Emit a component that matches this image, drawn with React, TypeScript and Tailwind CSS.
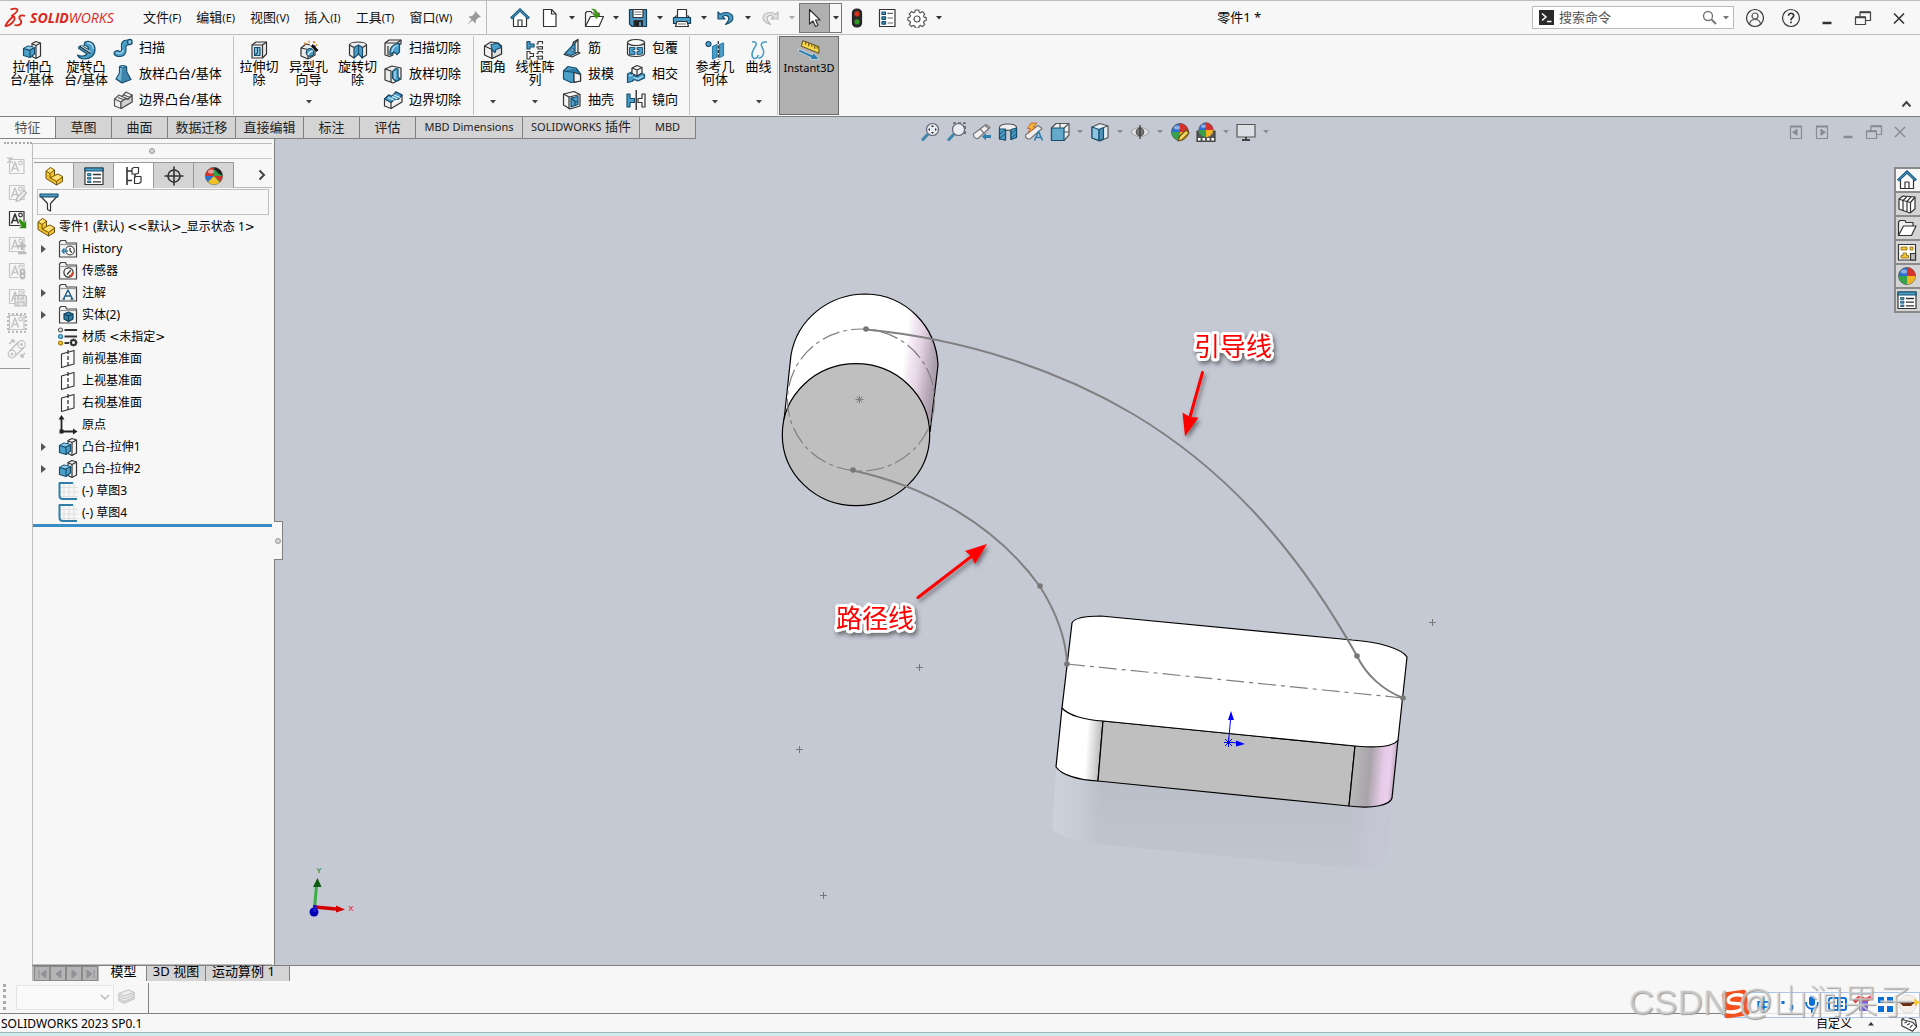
import { Fragment } from "react";
import type { ReactNode } from "react";

type Kids = { children?: ReactNode };

const B = "#4b9fc9";
const L = "#8cc8e4";
const K = "#333333";

function Ico({ children, size = 20 }: Kids & { size?: number }) {
  return (
    <svg
      width={size}
      height={size}
      viewBox="0 0 20 20"
      fill="none"
      stroke={K}
      strokeWidth="1.2"
      strokeLinejoin="round"
      className="block shrink-0"
      aria-hidden="true"
    >
      {children}
    </svg>
  );
}

function Caret({ className = "text-[#444]" }: { className?: string }) {
  return (
    <svg width="6" height="4" viewBox="0 0 6 4" className={`block shrink-0 ${className}`} aria-hidden="true">
      <path d="M0 0H6L3 3.5Z" fill="currentColor" />
    </svg>
  );
}

/* ---------- Ribbon icons ---------- */

const boss = (
  <Ico>
    <path d="M10 3.5 14 1.5 18.500 3V16L14 18.5 10 16.5Z" fill="#f4f4f4" />
    <path d="M14 5.500V18M14 5.500 10 3.8M14 5.500 18.500 3" />
    <path d="M1.5 8.5 6 6 12.500 7.5V14L8 17.5 1.5 15.5Z" fill={B} stroke="#174f6e" />
    <path d="M2 8.5 6 6.5 12 7.6 8 9.8Z" fill={L} stroke="none" />
    <path d="M1.5 8.5 8 10.3 12.500 7.5M8 10.3V17.5" stroke="#174f6e" />
  </Ico>
);
const revolve = (
  <Ico>
    <path d="M9 2C15 0 19 4 19 9.500C19 15.500 14 19 8.500 19C5 19 2.500 17.500 1.500 15C5 17 9 16 11 14L3 8.500C1.500 8 4 5 6 6L12.500 9.500C13 7.500 11 5.500 8 5.500Z" fill={B} stroke="#174f6e" />
    <path d="M11 2.800C15 2.500 17.500 5.500 17.200 9" stroke="#b7e0f2" />
    <path d="M4 6.500 14.500 13.500" stroke={K} strokeWidth="1.500" />
    <path d="M5 6 14.500 12" stroke="#fff" strokeWidth=".8" />
  </Ico>
);
const sweep = (
  <Ico>
    <path d="M1 15.500C1 12.500 5 12 6.500 13.500C8.500 14 9 12 8.500 9.500C7.500 5 10 2 14 2L18 1.500 19 5.500 15 7C12.500 7 13 9 13 11C13.500 16 10.500 18.500 7 18.500C3.500 18.500 1.500 17.500 1 15.500Z" fill={B} stroke="#174f6e" />
    <ellipse cx="16.800" cy="4" rx="2.200" ry="2.600" fill={L} stroke="#174f6e" />
    <path d="M3 14.500C6 16 9 16 10.300 12" stroke="#a9d8ee" />
  </Ico>
);
const loft = (
  <Ico>
    <path d="M6.500 2.500 9.500 1.500 13.500 2.500 13.800 8 18 15.500 9 19 3 15 6.500 9Z" fill="#3f86ad" stroke="#174f6e" />
    <path d="M6.500 2.500 9.500 3.800 13.500 2.500 9.500 1.500Z" fill={L} stroke="#174f6e" strokeWidth=".8" />
    <path d="M7 4V9L4 14.500 8 17 9 4Z" fill="#76b6d6" stroke="none" />
  </Ico>
);
const boundary = (
  <Ico>
    <path d="M1.500 9 6 5 9 6.500 13 2 19 5V12L8 18.500 1.500 16Z" fill="#f1f1f1" stroke="#555" />
    <path d="M1.500 9 8 12 12 9 15 9.500 19 5M8 12V18.500M5 7.500 11.500 10M9 6.500 15 9M10 4.500 17 7.500" stroke="#555" />
    <path d="M8 12 12 9 15 9.500 19 5V12L8 18.500Z" fill="#d3d3d3" stroke="#555" />
  </Ico>
);
const cutExtrude = (
  <Ico>
    <path d="M3 5 7 2H17.500V14L13.500 18H3Z" fill="#ececec" />
    <path d="M3 5H13.500V18M13.500 5 17.500 2" />
    <rect x="5.500" y="7.500" width="5.500" height="8" fill={L} stroke="#174f6e" />
    <path d="M5.500 15.500 8.500 13V7.500" stroke="#174f6e" />
  </Ico>
);
const holeWizard = (
  <Ico>
    <path d="M2 8 7 4 16 6V15L9 19 2 16Z" fill="#ececec" />
    <path d="M2 8 9 9.500V19" />
    <circle cx="11" cy="12.500" r="3.800" fill={B} stroke="#174f6e" />
    <path d="M9 15C10 12 12 11 14 11" stroke="#fff" />
    <path d="M12.500 5 18.500 11" stroke="#111" strokeWidth="2.600" />
    <path d="M11.500 4 12.800 5.300" stroke="#fff" strokeWidth="2" />
    <path d="M6 2.500V5M4.800 3.700H7.300M10 .5V3M15 1V3.500M13.800 2.200H16.300M17.500 4V6" stroke="#e0852c" />
  </Ico>
);
const cutRevolve = (
  <Ico>
    <path d="M1.500 5C1.500 1 18.500 1 18.500 5V15L14 18 10.500 8 6 18 1.500 15Z" fill="#ececec" />
    <path d="M6 7.500 10.500 5 14.500 7.500V18L10.500 14 6 18Z" fill={B} stroke="#174f6e" />
    <path d="M10.500 5V14" stroke="#174f6e" />
    <path d="M1.500 5 6 7.500M18.500 5 14.500 7.500" />
  </Ico>
);
const cutSweep = (
  <Ico>
    <path d="M2 5 6 2H18V6C12 7 9.500 11 10 17L6.500 18.500 2 17Z" fill="#ececec" />
    <path d="M2 5H14L18 2M5 8V17.500" />
    <path d="M7 17C6 10 10 5.500 16.500 5.500V14L14 16.500 11 14Z" fill={B} stroke="#174f6e" />
    <path d="M9 14C9 10 12 7.500 15 7.500" stroke="#b7e0f2" />
  </Ico>
);
const cutLoft = (
  <Ico>
    <path d="M2 5 9 2 18 4V15L10 19 2 16Z" fill="#ececec" />
    <path d="M2 5 8 7V18" />
    <path d="M9.500 7.500 13 4.500 15 5V13L17 15 13 17.500 9.500 14Z" fill={B} stroke="#174f6e" />
    <path d="M12 7V15" stroke="#b7e0f2" />
  </Ico>
);
const cutBoundary = (
  <Ico>
    <path d="M1.500 9 6 5 9 6.500 13 2 19 5V12L8 18.500 1.500 16Z" fill="#f1f1f1" />
    <path d="M1.500 9 6 5 9 6.500 13 2 19 5 15 9.500 12 9 8 12.500Z" fill={B} stroke="#174f6e" />
    <path d="M5 7.500 11 10M9 6.500 14.500 9M10.500 4.800 17 7.500" stroke="#d4eefa" />
    <path d="M8 12V18.500" />
  </Ico>
);
const fillet = (
  <Ico>
    <path d="M1.500 6 8 2 15 3 18.500 6V14L9 18.500 1.500 15Z" fill="#f2f2f2" />
    <path d="M1.500 6 9 9.500V18.500" />
    <path d="M9 9.500C9 6.500 11 4.500 14.500 4.500L18.500 8V14L9 18.500Z" fill="#dedede" />
    <path d="M8 4.500 15 3.200 18.500 7.500 13 9.500 12 12.500 9 9.500C8 7 8.500 5.500 8 4.500Z" fill={B} stroke="#174f6e" />
  </Ico>
);
const pattern = (
  <Ico>
    <path d="M2 1.500H5V4H9V7H5V9H2Z" fill={B} stroke="#174f6e" />
    <path d="M11.500 4H13V1.500H17.500V4M17.500 6.500V9H13V7H11.500Z" fill="#f7f7f7" strokeWidth="1.100" />
    <path d="M2 11.500H5V13.500H8.500V16.500H5V19H2Z" fill="#f7f7f7" strokeWidth="1.100" />
    <path d="M11.500 13.500H13V11.500H17.500V13.500M17.500 16V19H13V16.500H11.500Z" fill="#f7f7f7" strokeWidth="1.100" />
  </Ico>
);
const rib = (
  <Ico>
    <path d="M11.500 4 16 1.500V14L18 15 10 19 2 16.500 9 13Z" fill="#ececec" />
    <path d="M3 15.500 13 5V15.500L9 17.500Z" fill={B} stroke="#174f6e" />
    <path d="M8.500 13 11 10V14Z" fill="#f7f7f7" stroke="#174f6e" strokeWidth=".8" />
    <path d="M13 5 16 1.500M13 15.500 16 14" />
  </Ico>
);
const draft = (
  <Ico>
    <path d="M1.500 7 6 2.500 14 4 18.500 10V17L9 18.500 1.500 15Z" fill={B} stroke="#174f6e" />
    <path d="M1.500 7 12 8.500 12 18 18.500 17V10L14 4" fill="#2f7ba5" stroke="#174f6e" />
    <path d="M12 8.500 18.500 10.500V17L12 18.300Z" fill="#f4f4f4" />
  </Ico>
);
const shell = (
  <Ico>
    <path d="M1.500 4 12 1.500 18 4.500V16L8 19 1.500 15Z" fill="#f4f4f4" />
    <path d="M1.500 4 7 7V19M7 7 18 4.500" />
    <path d="M9 8 16 6.500V14.500L9 17Z" fill={B} stroke="#174f6e" />
    <path d="M9 8 13 11.500V15.500M13 11.500 16 12" stroke="#174f6e" />
  </Ico>
);
const wrap = (
  <Ico>
    <path d="M1.500 4.500V15.500C1.500 19.500 18.500 19.500 18.500 15.500V4.500Z" fill="#ededed" />
    <ellipse cx="10" cy="4.500" rx="8.500" ry="3" fill="#fafafa" />
    <path d="M3.500 9.500H9V11.500H7V13.500H9V16.500H3.500ZM11 9.500H16.500V16L11 16.500V13.500H13V11.500H11Z" fill={B} stroke="#174f6e" strokeWidth=".9" />
  </Ico>
);
const intersect = (
  <Ico>
    <path d="M6 4 11 1.500 16 3.500V9L11 12 6 9.500Z" fill="#f4f4f4" />
    <path d="M6 4 11 6V12M11 6 16 3.500" />
    <path d="M1.500 10 5.500 8V10.500L11 12.500 16 9.500 18.500 10.500V14L12 17 8 15.500 6 17.500 1.500 18.500Z" fill={B} stroke="#174f6e" />
    <path d="M3 12 7 10.800M8 13.500 12 15 17 12" stroke="#b7e0f2" />
  </Ico>
);
const mirror = (
  <Ico>
    <path d="M1 4H4V8.500H8.500V12.500H4V17H1Z" fill={B} stroke="#174f6e" />
    <path d="M19 4H16V8.500H12V12.500H16V17H19Z" fill="#f7f7f7" />
    <path d="M10.200 0V20" stroke="#111" />
  </Ico>
);
const refGeom = (
  <Ico>
    <circle cx="3.500" cy="4" r="2.500" fill={B} stroke="#174f6e" />
    <path d="M7.500 6.500 12 4.500V17L7.500 19ZM14.500 4.500 18.500 3V15.500L14.500 17.500Z" fill={B} stroke="#2b7fae" />
    <path d="M13.300 1V19.500" stroke="#222" strokeDasharray="3 1.500" />
  </Ico>
);
const curves = (
  <Ico>
    <path d="M3 2C6 1 8.500 3 6.500 6C4 10 2 13 3.500 17C5 19.500 8.500 18.500 9.500 15M18 2C14 1.500 11 3 13 7C16 12 15 17 9.500 18.500" stroke="#4a9cc6" strokeWidth="1.500" />
  </Ico>
);
const instant3d = (
  <Ico size={22}>
    <path d="M4.500 1.500 19 7V13L3 6.500Z" fill="#f7d648" stroke="#4a3d10" strokeWidth=".8" />
    <path d="M7 2.800V5M9.800 3.800V6.500M12.500 5V7M15.200 6V8.800M17.500 6.800V8.800" stroke="#4a3d10" strokeWidth=".9" />
    <path d="M.5 9 13 14.500 14 12.500 19.500 18.500 11 18.800 12 17 .5 11.500Z" fill="#2d7fb0" stroke="#fff" strokeWidth=".5" />
  </Ico>
);

/* ---------- Shared small icons ---------- */

const home = (
  <Ico>
    <path d="M3.500 9V18.500H16.500V9" fill="#fff" />
    <path d="M8 18V12H12V18" />
    <path d="M1 10.500 10 2 19 10.500" stroke="#1b5a80" strokeWidth="3" strokeLinejoin="miter" />
    <path d="M1.500 10 10 2.200 18.500 10" stroke={B} strokeWidth="1" strokeLinejoin="miter" />
  </Ico>
);
const partIcon = (
  <Ico>
    <path d="M2 5 6.500 1.500 10.500 4V9.500L14 8 18.500 10.500V15.500L12.500 19 2 12.500Z" fill="#f2c230" stroke="#6b4f0b" strokeWidth="1" />
    <path d="M3 5 6.500 2.300 9.800 4.200 6 6.700ZM8 11.700 14 8.800 17.500 10.800 12.500 14Z" fill="#ffe27a" stroke="none" />
    <path d="M2 5 6 7.500V12L12.500 15.500V19M6 7.500 10.500 4M12.500 15.500 18.500 11M6 12 10.500 9.500" stroke="#6b4f0b" strokeWidth=".9" />
  </Ico>
);
const listIcon = (
  <Ico>
    <rect x="1" y="2" width="18" height="16.500" fill="#fff" />
    <path d="M1 2H19V5H1Z" fill={B} stroke="#174f6e" />
    <path d="M3.500 7.500H7V9.500H3.500ZM3.500 11.200H7V13.200H3.500ZM3.500 15H7V16.500H3.500Z" fill={B} stroke="#174f6e" strokeWidth=".8" />
    <path d="M9 8.500H17M9 12.200H17M9 15.800H17" strokeWidth="1.300" />
  </Ico>
);
const ballInner = (
  <>
    <circle cx="10" cy="10" r="8.500" fill="#2f6fd0" stroke="#555" strokeWidth=".8" />
    <path d="M10 10V1.500A8.500 8.500 0 0 1 18.500 10Z" fill="#d3332c" stroke="none" />
    <path d="M10 10H18.500A8.500 8.500 0 0 1 10 18.500Z" fill="#f0b422" stroke="none" />
    <path d="M10 10V18.500A8.500 8.500 0 0 1 1.500 10Z" fill="#37a04a" stroke="none" />
    <ellipse cx="7" cy="5.500" rx="3" ry="2" fill="#fff" fillOpacity=".45" stroke="none" />
  </>
);

/* ---------- Title bar ---------- */

const menus = [
  ["文件", "(F)"],
  ["编辑", "(E)"],
  ["视图", "(V)"],
  ["插入", "(I)"],
  ["工具", "(T)"],
  ["窗口", "(W)"],
];

const quick: { label: string; icon: ReactNode; caret?: boolean; faded?: boolean }[] = [
  { label: "主页", icon: home },
  {
    label: "新建",
    caret: true,
    icon: (
      <Ico>
        <path d="M3.500 1.500H11.500L16 6V18.500H3.500Z" fill="#fff" />
        <path d="M11.500 1.500V6H16" />
      </Ico>
    ),
  },
  {
    label: "打开",
    caret: true,
    icon: (
      <Ico>
        <path d="M1.500 18.500V5L3 3.500H7L8 5H15V8" fill="#f4f4f4" />
        <path d="M1.500 18.500 6.500 8.500H19.500L15 18.500Z" fill="#fff" />
        <path d="M7 1C11 0 13.500 2.500 13.500 6H16.500L12.500 11 8.500 6H11C11 4 9.500 2 7 1Z" fill="#3f9a10" stroke="none" />
      </Ico>
    ),
  },
  {
    label: "保存",
    caret: true,
    icon: (
      <Ico>
        <path d="M1.500 1.500H18.500V18.500H4L1.500 16Z" fill="#4a94bd" stroke="#123f58" />
        <path d="M5 1.500H15V9.500H5Z" fill="#fff" />
        <path d="M6.500 4H13.500M6.500 6.500H13.500" stroke="#777" />
        <path d="M6 12.500H14.500V18.500H6Z" fill="#222" />
        <path d="M11 14H13V18H11Z" fill="#4a94bd" stroke="none" />
      </Ico>
    ),
  },
  {
    label: "打印",
    caret: true,
    icon: (
      <Ico>
        <path d="M5.500 9V1.500H14.500V9" fill="#fff" />
        <path d="M1.500 9.500H18.500V15.500H1.500Z" fill={B} stroke="#123f58" />
        <path d="M3 9 4.500 7.500M17 9 15.500 7.500" />
        <path d="M5 13.500H15L16.500 18.500H3.500Z" fill="#fff" />
        <path d="M6 16H14" stroke="#888" />
      </Ico>
    ),
  },
  {
    label: "撤消",
    caret: true,
    icon: (
      <Ico>
        <path d="M2 4V11H9L6.500 8.800C10 6 14 8 12.500 12C12 14 10.500 15.500 9.500 16.500C14 15.500 17.500 12.500 16.800 9C16 4.500 9 3 4.300 6.300Z" fill={B} stroke="#174f6e" />
      </Ico>
    ),
  },
  {
    label: "重做",
    caret: true,
    faded: true,
    icon: (
      <Ico>
        <path d="M18 4V11H11L13.500 8.800C10 6 6 8 7.500 12C8 14 9.500 15.500 10.500 16.500C6 15.500 2.500 12.500 3.200 9C4 4.500 11 3 15.700 6.300Z" fill="#e4e4e4" stroke="#bbb" />
      </Ico>
    ),
  },
];

function TitleBar() {
  return (
    <header className="flex h-[35px] shrink-0 items-center border-t border-b border-[#bdbdbd] bg-[#f7f7f7]">
      <div className="flex w-[143px] shrink-0 items-center pl-1 text-[#da291c]">
        <svg width="22" height="22" viewBox="0 0 22 22" fill="none" stroke="#da291c" strokeWidth="1.800" aria-hidden="true">
          <path d="M6.500 2.500C9 1.500 13 1 13.500 2.500C14 4.500 10.500 7 7.500 9" />
          <path d="M7.500 9C11 8.500 12 12 8.500 15.500C6 18 2.500 19.500 1.500 19C2 16 5.500 13 9 9.500" />
          <path d="M21 9C18 7.500 14.500 8.500 15.500 11.500C17 14 18.500 15 16.500 17C15 18.500 12.500 18.500 10.500 18" />
        </svg>
        <span className="ml-1 font-['Open_Sans',sans-serif] text-sm italic">
          <b>SOLID</b>WORKS
        </span>
      </div>
      <nav className="flex shrink-0 gap-[15px]" aria-label="菜单">
        {menus.map(([t, k]) => (
          <button key={t} className="whitespace-nowrap text-[13px] text-[#111]">
            {t}
            <span className="text-[11px]">{k}</span>
          </button>
        ))}
      </nav>
      <button aria-label="固定" className="ml-3.5">
        <svg width="16" height="16" viewBox="0 0 16 16" fill="#999" className="block" aria-hidden="true">
          <path d="M9 1 15 7 12.500 7.500 10 10 9.500 13.500 6.500 10.500 1 15 5.500 9.500 2.500 6.500 6 6 8.500 3.500Z" />
        </svg>
      </button>
      <div className="ml-1 flex h-full items-center border-l border-[#bdbdbd] pl-[18px]">
        {quick.map((q) => (
          <div key={q.label} className="flex items-center">
            <button aria-label={q.label} className="flex w-[30px] justify-center">
              {q.icon}
            </button>
            {q.caret && (
              <button aria-label={`${q.label}选项`} className="flex h-6 w-[14px] items-center justify-center">
                <Caret className={q.faded ? "text-[#aaa]" : "text-[#333]"} />
              </button>
            )}
          </div>
        ))}
        <button aria-label="选择" className="flex h-[30px] w-[31px] items-center justify-center border border-[#777] bg-[#b0b0b0]">
          <Ico>
            <path d="M4.500 1.500V16L8 13 10.500 18.500 13 17.300 10.500 12H15Z" fill="#fff" />
          </Ico>
        </button>
        <button aria-label="选择选项" className="flex h-[30px] w-3 items-center justify-center border border-l-0 border-[#777]">
          <Caret className="text-[#333]" />
        </button>
        <button aria-label="重建模型" className="flex w-[30px] justify-center">
          <Ico>
            <rect x="5.500" y="1" width="9" height="18" rx="4" fill="#2b2b2b" stroke="#222" />
            <circle cx="10" cy="5.800" r="2.600" fill="#d8311c" stroke="none" />
            <circle cx="10" cy="13.800" r="2.600" fill="#2c9a22" stroke="none" />
          </Ico>
        </button>
        <button aria-label="文件属性" className="flex w-[30px] justify-center">
          <Ico>
            <rect x="2.500" y="1.500" width="15.500" height="17" fill="#fff" />
            <path d="M5 4H8.500V6.500H5ZM5 8.800H8.500V11.300H5ZM5 13.600H8.500V16.100H5Z" fill={B} stroke="#174f6e" />
            <path d="M10.500 5.300H16M10.500 10H16M10.500 15H16" stroke="#666" />
          </Ico>
        </button>
        <button aria-label="选项" className="flex w-[30px] justify-center">
          <Ico>
            <path d="M8.300 2h3.400l.5 2.200 1.400.6 1.900-1.200 2.200 2.300-1.100 1.900.5 1.300 2.100.6v2.800l-2.100.6-.6 1.400 1.200 1.900-2.200 2.200-1.900-1.200-1.400.6-.5 2.100H8.300l-.5-2.100-1.400-.6-1.900 1.200-2.200-2.200 1.200-1.900-.6-1.400-2-.6V9.700l2-.6.6-1.300-1.200-1.900 2.200-2.300 1.900 1.200 1.400-.6Z" stroke="#555" fill="#fff" />
            <circle cx="10" cy="11" r="3" stroke="#555" />
          </Ico>
        </button>
        <button aria-label="更多选项" className="flex h-6 w-[14px] items-center justify-center">
          <Caret className="text-[#333]" />
        </button>
      </div>
      <h1 className="flex-1 text-center text-[13px] text-black">零件1 *</h1>
      <label className="flex h-[23px] w-[202px] items-center border border-[#bbb] bg-white pl-1.5 pr-1">
        <svg width="15" height="15" viewBox="0 0 15 15" className="shrink-0" aria-hidden="true">
          <path d="M0 0H15V15H0Z" fill="#2a2a2a" />
          <path d="M3 3.500 7 7 3 10.500M8 11.500H12.500" stroke="#fff" strokeWidth="1.500" fill="none" />
        </svg>
        <input aria-label="搜索命令" placeholder="搜索命令" className="ml-[5px] w-full min-w-0 bg-transparent text-[13px] outline-none placeholder:text-[#555]" />
        <svg width="15" height="15" viewBox="0 0 15 15" fill="none" stroke="#777" strokeWidth="1.300" className="shrink-0" aria-hidden="true">
          <circle cx="6" cy="6" r="4.500" />
          <path d="M9.500 9.500 14 14" strokeWidth="2" />
        </svg>
        <span className="ml-1.5">
          <Caret className="text-[#777]" />
        </span>
      </label>
      <div className="flex w-[186px] pl-[3px]">
        <button aria-label="登录" className="flex w-9 justify-center">
          <Ico>
            <circle cx="10" cy="10" r="8.500" />
            <circle cx="10" cy="8" r="3" stroke="#555" />
            <path d="M4.500 16C5 12.500 7 11.500 10 11.500S15 12.500 15.500 16" stroke="#555" />
          </Ico>
        </button>
        <button aria-label="帮助" className="flex w-9 justify-center">
          <Ico>
            <circle cx="10" cy="10" r="8.500" />
            <path d="M7.500 7.800C7.500 4.300 12.800 4.500 12.700 7.700C12.600 9.500 10 9.700 10 12.200M10 13.500V15.300" strokeWidth="1.700" />
          </Ico>
        </button>
        <button aria-label="最小化" className="flex w-9 justify-center">
          <Ico>
            <path d="M5.500 15H14.500" strokeWidth="2.500" />
          </Ico>
        </button>
        <button aria-label="还原" className="flex w-9 justify-center">
          <Ico>
            <path d="M7 9V4H17.500V12.500H12.500M2.500 9H12.500V16.500H2.500Z" stroke="#444" />
            <path d="M7 4.300H17.500M2.500 9.300H12.500" stroke="#444" strokeWidth="2" />
          </Ico>
        </button>
        <button aria-label="关闭" className="flex w-9 justify-center">
          <Ico>
            <path d="M5 5.500 15 15.500M15 5.500 5 15.500" strokeWidth="1.600" />
          </Ico>
        </button>
      </div>
    </header>
  );
}

/* ---------- Ribbon ---------- */

function Big({ icon, lines, caret, w }: { icon: ReactNode; lines: string[]; caret?: boolean; w: string }) {
  return (
    <button className={`relative flex h-full shrink-0 flex-col items-center pt-[5px] text-[13px] leading-[13px] ${w}`}>
      {icon}
      <span className="whitespace-nowrap">
        {lines.map((l, i) => (
          <Fragment key={l}>
            {i > 0 && <br />}
            {l}
          </Fragment>
        ))}
      </span>
      {caret && (
        <span className="absolute bottom-3">
          <Caret />
        </span>
      )}
    </button>
  );
}

function Small({ items, className }: { items: [string, ReactNode][]; className: string }) {
  return (
    <div className={`flex shrink-0 flex-col ${className}`}>
      {items.map(([t, icon]) => (
        <button key={t} className="flex h-[26px] items-center gap-1.5 whitespace-nowrap text-[13px]">
          {icon}
          <span>{t}</span>
        </button>
      ))}
    </div>
  );
}

const Sep = () => <div className="my-px w-px shrink-0 self-stretch bg-[#c4c4c4]" />;

function Ribbon() {
  return (
    <section className="flex h-[82px] shrink-0 border-b border-[#808080] bg-[#f7f7f7] pl-[5px] text-black" aria-label="特征">
      <Big w="w-[54px]" icon={boss} lines={["拉伸凸", "台/基体"]} />
      <Big w="w-[54px]" icon={revolve} lines={["旋转凸", "台/基体"]} />
      <Small className="w-[120px]" items={[["扫描", sweep], ["放样凸台/基体", loft], ["边界凸台/基体", boundary]]} />
      <Sep />
      <Big w="w-[50px]" icon={cutExtrude} lines={["拉伸切", "除"]} />
      <Big w="w-[49px]" icon={holeWizard} lines={["异型孔", "向导"]} caret />
      <Big w="w-[49px]" icon={cutRevolve} lines={["旋转切", "除"]} />
      <Small className="w-[91px] pl-px" items={[["扫描切除", cutSweep], ["放样切除", cutLoft], ["边界切除", cutBoundary]]} />
      <Sep />
      <Big w="w-[38px]" icon={fillet} lines={["圆角"]} caret />
      <Big w="w-[46px]" icon={pattern} lines={["线性阵", "列"]} caret />
      <Small className="w-[68px] pl-1" items={[["筋", rib], ["拔模", draft], ["抽壳", shell]]} />
      <Small className="w-[63px]" items={[["包覆", wrap], ["相交", intersect], ["镜向", mirror]]} />
      <Sep />
      <Big w="w-[50px]" icon={refGeom} lines={["参考几", "何体"]} caret />
      <Big w="w-[37px]" icon={curves} lines={["曲线"]} caret />
      <Sep />
      <button className="my-px ml-px flex w-[60px] flex-col items-center border border-[#6a6a6a] bg-[#b0b0b0] pt-0.5 font-['Noto_Sans',sans-serif] text-[11px]">
        {instant3d}
        <span className="leading-[14px]">Instant3D</span>
      </button>
      <button aria-label="折叠" className="ml-auto mb-2 mr-2 self-end">
        <svg width="11" height="8" viewBox="0 0 11 8" fill="none" stroke="#444" strokeWidth="2" className="block" aria-hidden="true">
          <path d="M1.500 6.500 5.500 2 9.500 6.500" />
        </svg>
      </button>
    </section>
  );
}

const tabs: [string, string, string][] = [
  ["", "特征", "w-14"],
  ["", "草图", "w-14"],
  ["", "曲面", "w-14"],
  ["", "数据迁移", "w-[68px]"],
  ["", "直接编辑", "w-[68px]"],
  ["", "标注", "w-14"],
  ["", "评估", "w-14"],
  ["MBD Dimensions", "", "w-[107px]"],
  ["SOLIDWORKS", " 插件", "w-[117px]"],
  ["MBD", "", "w-14"],
];

/* ---------- Feature tree ---------- */

function NoteIcon({ active, children }: Kids & { active?: boolean }) {
  const c = active ? "#333" : "#c6c6c6";
  return (
    <Ico>
      <path d="M2.500 2.500H17V16.500H2.500Z" stroke={c} fill="none" />
      <path d="M4.500 14.500 8 5 11.500 14.500M5.500 11.500H10.500" stroke={c} strokeWidth="1.600" />
      <circle cx="13.500" cy="6" r="1.800" stroke={c} />
      {children}
    </Ico>
  );
}

const noteTools: [string, ReactNode][] = [
  ["新建注解视图", <NoteIcon><path d="M0 0 6 6M6 0 0 6M3 -1V7" stroke="#c6c6c6" /></NoteIcon>],
  ["编辑注解视图", <NoteIcon><path d="M9 18.500 10 14.500 17 7.500 19.500 10 12.500 17.500Z" fill="#eee" stroke="#bbb" /></NoteIcon>],
  ["激活注解视图", <NoteIcon active><path d="M11 11 13 9.500 17 13.500 19.500 11.500V19.500H11.500L14 17Z" fill="#2f8f0c" stroke="#f7f7f7" strokeWidth=".6" /></NoteIcon>],
  ["添加注解", <NoteIcon><path d="M15 7V15M11 11H19M11 18H19.500" stroke="#bbb" strokeWidth="2.500" /></NoteIcon>],
  ["注解可见性", <NoteIcon><rect x="12" y="7" width="7" height="12" rx="3" fill="#bbb" stroke="#f7f7f7" /><path d="M15.500 9.500V11.500M15.500 14V16" stroke="#eee" strokeWidth="2" /></NoteIcon>],
  ["保存注解视图", <NoteIcon><path d="M8 8.500H18L19.500 10V19H8Z" fill="#e5e5e5" stroke="#bbb" /><path d="M11 8.500V12H16V8.500M10.500 19V15H17V19" stroke="#bbb" /></NoteIcon>],
  ["框选注解", <NoteIcon><path d="M1 1H19V19H1Z" stroke="#bbb" strokeWidth="2.500" strokeDasharray="2 2" /></NoteIcon>],
  [
    "运动链",
    <Ico>
      <circle cx="5" cy="15" r="3.800" stroke="#c0c0c0" />
      <circle cx="14.500" cy="5.500" r="3.800" stroke="#c0c0c0" />
      <path d="M2.500 12 11.500 3M7.500 17.500 17 8.500M2 5 7 1M7 1H4M7 1V4M18 14 14 18M14 18V15M14 18H17" stroke="#c0c0c0" strokeWidth="1.500" />
      <circle cx="5" cy="15" r="1" stroke="#c0c0c0" />
      <circle cx="14.500" cy="5.500" r="1" stroke="#c0c0c0" />
    </Ico>,
  ],
];

function Folder({ children }: Kids) {
  return (
    <Ico>
      <path d="M1.500 18V3L3 1.500H7.500L8.500 4H18.500V18Z" fill="#f4f4f4" stroke="#444" />
      <path d="M1.500 5.500H18.500" stroke="#999" />
      {children}
    </Ico>
  );
}

const plane = (
  <Ico>
    <path d="M3.500 5 16 1.500V15L3.500 18.500Z" fill="#fafafa" strokeWidth="1.100" />
    <path d="M10 1V19" strokeDasharray="4 2" strokeWidth="1.300" />
  </Ico>
);
const sketch = (
  <Ico>
    <path d="M6 1.500V19M11 1.500V19M16 1.500V19M1 6.500H20M1 11H20M1 15.500H20" stroke="#e0e0e0" />
    <path d="M15 2H1.500V14.500Q1.500 18 5 18H19" stroke="#2e7ea8" strokeWidth="2" />
  </Ico>
);

const tree: { t: string; icon: ReactNode; open?: boolean }[] = [
  {
    t: "History",
    open: true,
    icon: (
      <Folder>
        <circle cx="12" cy="11.500" r="4.300" fill="#fff" stroke="#555" />
        <path d="M12 9V11.800L14 13.500" />
        <path d="M4 12H10M4 12 6.500 9.500M4 12 6.500 14.500" stroke="#2d7fb0" strokeWidth="1.600" />
      </Folder>
    ),
  },
  {
    t: "传感器",
    icon: (
      <Folder>
        <circle cx="10.500" cy="11.500" r="4.600" fill="#fff" />
        <path d="M9 13.500 13 9" />
        <path d="M11 15C13.500 15 14.500 13.500 14.500 11.500" stroke="#e04020" strokeWidth="2" />
      </Folder>
    ),
  },
  {
    t: "注解",
    open: true,
    icon: (
      <Folder>
        <path d="M5.500 16 10 7 14.500 16M7.500 13H12.500M4.500 16H7M12.500 16H15.500" stroke="#235f88" strokeWidth="1.500" />
      </Folder>
    ),
  },
  {
    t: "实体(2)",
    open: true,
    icon: (
      <Folder>
        <path d="M6 9 10.500 7 15 9V14L10.500 16.500 6 14Z" fill="#2f7fa8" stroke="#123f58" />
        <path d="M6 9 10.500 11 15 9M10.500 11V16.500" stroke="#123f58" />
      </Folder>
    ),
  },
  {
    t: "材质 <未指定>",
    icon: (
      <Ico>
        <circle cx="2.500" cy="3" r="2" fill="#eee" stroke="#555" />
        <circle cx="2.500" cy="9.500" r="2" fill={L} stroke="#1f6f9a" />
        <circle cx="2.500" cy="16" r="2" fill="#f2c230" stroke="#a87d10" />
        <path d="M6.500 3H19M6.500 9.500H19M6.500 16H11" strokeWidth="1.800" />
        <circle cx="15.500" cy="15.500" r="2.500" strokeWidth="2" fill="none" />
        <path d="M15.500 11.500V13M15.500 18V19.500M11.500 15.500H13M18 15.500H19.500M12.700 12.700 13.700 13.700M17.300 17.300 18.300 18.300M18.300 12.700 17.300 13.700M13.700 17.300 12.700 18.300" strokeWidth="1.300" />
      </Ico>
    ),
  },
  { t: "前视基准面", icon: plane },
  { t: "上视基准面", icon: plane },
  { t: "右视基准面", icon: plane },
  {
    t: "原点",
    icon: (
      <Ico>
        <path d="M3.500 4V16.500H16" strokeWidth="1.800" stroke="#222" />
        <path d="M3.500 0 6.500 4.500H.5ZM19.500 16.500 15 13.500V19.500ZM1.500 14.500H5.500V18.500H1.500Z" fill="#222" stroke="none" />
      </Ico>
    ),
  },
  { t: "凸台-拉伸1", open: true, icon: boss },
  { t: "凸台-拉伸2", open: true, icon: boss },
  { t: "(-) 草图3", icon: sketch },
  { t: "(-) 草图4", icon: sketch },
];

/* Angle brackets take the wider DejaVu glyphs. */
function TreeText({ text }: { text: string }) {
  return (
    <>
      {text.split(/([<>]+)/).map((part, i) =>
        i % 2 ? (
          <span key={i} className="font-['DejaVu_Sans',sans-serif]">
            {part}
          </span>
        ) : (
          part
        ),
      )}
    </>
  );
}

const panelTabs: [string, ReactNode, string][] = [
  ["FeatureManager", partIcon, "bg-[#f7f7f7]"],
  ["PropertyManager", listIcon, "bg-[#d4d4d4]"],
  [
    "ConfigurationManager",
    <Ico>
      <path d="M3 1V19M3 5H8M3 14.500H8M11 8V11" strokeWidth="1.600" />
      <path d="M8 2.500 10 1.500H14.500V7L12.500 8H8ZM10.500 11.500 12 10.500H17V16L15 17.500H10.500Z" fill="#fff" />
    </Ico>,
    "bg-white",
  ],
  [
    "DimXpertManager",
    <Ico>
      <circle cx="10" cy="10" r="6" strokeWidth="1.600" />
      <path d="M10 .5V19.500M.5 10H19.500" strokeWidth="1.600" />
    </Ico>,
    "bg-[#d4d4d4]",
  ],
  [
    "DisplayManager",
    <Ico>
      <circle cx="10" cy="10" r="8.500" fill="#37a04a" stroke="#555" strokeWidth=".8" />
      <path d="M10 10H1.500A8.500 8.500 0 0 1 10 1.500Z" fill="#d3332c" stroke="none" />
      <path d="M10 10H1.500A8.500 8.500 0 0 0 4 16Z" fill="#2f6fd0" stroke="none" />
      <path d="M10 10 15.500 16.500A8.500 8.500 0 0 1 4 16Z" fill="#f0c028" stroke="none" />
      <path d="M10 10 16.500 15.500A8.500 8.500 0 0 0 18.500 10Z" fill="#d3332c" stroke="none" />
      <path d="M10 1.500A8.500 8.500 0 0 1 18.500 9.500L15 8 10 3Z" fill="#222" stroke="none" />
      <ellipse cx="7" cy="5.500" rx="3" ry="2" fill="#fff" fillOpacity=".5" stroke="none" />
    </Ico>,
    "bg-[#d4d4d4]",
  ],
];

function SidePanel() {
  return (
    <aside className="flex shrink-0 bg-[#f7f7f7]">
      <div className="w-8 shrink-0" role="toolbar" aria-label="注解">
        <div className="ml-1 mt-[3px] h-[2px] border-t-2 border-dotted border-[#aaa]" />
        <div className="mt-2.5 mr-0.5 flex flex-col items-center border-b border-[#999] pb-1.5 pl-1">
          {noteTools.map(([label, icon]) => (
            <button key={label} aria-label={label} className="flex h-[26px] items-center">
              {icon}
            </button>
          ))}
        </div>
      </div>
      <div className="flex w-[243px] flex-col border-r border-[#808080] pt-1 text-black">
        <div className="mr-0.5 flex min-h-0 flex-1 flex-col border-t border-l border-[#bdbdbd]">
          <div className="flex h-[15px] items-center justify-center border-b border-[#c8c8c8] pr-0.5">
            <span className="h-1.5 w-1.5 rounded-full border border-[#999] bg-[#d4d4d4]" />
          </div>
          <div className="ml-px mt-[3px] flex items-stretch">
            {panelTabs.map(([label, icon, bg]) => (
              <button key={label} aria-label={label} className={`flex h-[26px] w-10 items-center justify-center border-t border-r border-[#999] ${bg}`}>
                {icon}
              </button>
            ))}
            <button aria-label="更多" className="flex flex-1 items-center justify-end border-b border-[#bbb] pr-1.5">
              <svg width="8" height="12" viewBox="0 0 8 12" fill="none" stroke="#444" strokeWidth="2" aria-hidden="true">
                <path d="M1.500 1.500 6 6 1.500 10.500" />
              </svg>
            </button>
          </div>
          <label className="ml-1 mr-[3px] mt-px flex h-[26px] items-center border border-[#c0c0c0] pl-px">
            <Ico>
              <path d="M2 4.500 8.500 11.500V17.500L11.500 19V11.500L18 4.500" fill="#fff" />
              <path d="M1 2H19V4.800H1Z" fill={B} stroke="#174f6e" />
            </Ico>
            <input aria-label="筛选" className="h-full min-w-0 flex-1 bg-transparent text-xs outline-none" />
          </label>
          <ul className="pt-px text-xs">
            <li className="flex h-[22px] items-center whitespace-nowrap pl-[3px]">
              {partIcon}
              <span className="ml-[3px]">
                <TreeText text="零件1 (默认) <<默认>_显示状态 1>" />
              </span>
            </li>
            {tree.map((n) => (
              <li key={n.t} className="flex h-[22px] items-center">
                <span className="flex w-[25px] pl-2">
                  {n.open && (
                    <button aria-label={`展开 ${n.t}`}>
                      <svg width="5" height="8" viewBox="0 0 5 8" className="block" aria-hidden="true">
                        <path d="M0 0 5 4 0 8Z" fill="#555" />
                      </svg>
                    </button>
                  )}
                </span>
                {n.icon}
                <span className="ml-1">
                  <TreeText text={n.t} />
                </span>
              </li>
            ))}
          </ul>
          <div className="h-[3px] bg-[#3a8dc4]" />
          <div className="flex-1" />
          <div className="h-[3px] border-b border-[#bdbdbd]" />
        </div>
      </div>
    </aside>
  );
}

/* ---------- Graphics area ---------- */

function Model() {
  const plus = [
    [1432, 622],
    [919, 667],
    [799, 749],
    [823, 895],
  ];
  return (
    <svg viewBox="275 139 1645 826" className="block h-full w-full" role="img" aria-label="三维模型">
      <defs>
        <linearGradient id="cyl" gradientUnits="userSpaceOnUse" x1="906" y1="340" x2="938" y2="344">
          <stop offset="0" stopColor="#fff" />
          <stop offset=".2" stopColor="#f3e9f3" />
          <stop offset=".5" stopColor="#e3d3e2" />
          <stop offset=".75" stopColor="#c4b4c4" />
          <stop offset="1" stopColor="#a99cab" />
        </linearGradient>
        <linearGradient id="cornerL" gradientUnits="userSpaceOnUse" x1="1086" y1="750" x2="1101" y2="751">
          <stop offset="0" stopColor="#fff" />
          <stop offset="1" stopColor="#b9b9b9" />
        </linearGradient>
        <linearGradient id="cornerR" gradientUnits="userSpaceOnUse" x1="1352" y1="770" x2="1396" y2="774">
          <stop offset="0" stopColor="#b9b9b9" />
          <stop offset=".4" stopColor="#a9a3a9" />
          <stop offset=".7" stopColor="#e6cbe8" />
          <stop offset=".85" stopColor="#ebd0ed" />
          <stop offset="1" stopColor="#b7a2b9" />
        </linearGradient>
        <linearGradient id="mirrorFade" x1="0" y1="0" x2="0" y2="1">
          <stop offset="0" stopColor="#b9bec8" />
          <stop offset="1" stopColor="#c1c5d0" />
        </linearGradient>
        <linearGradient id="mirrorEdge" gradientUnits="userSpaceOnUse" x1="1056" y1="800" x2="1100" y2="800">
          <stop offset="0" stopColor="#ccd1dc" />
          <stop offset=".5" stopColor="#c7ccd7" />
          <stop offset="1" stopColor="#c7ccd7" stopOpacity="0" />
        </linearGradient>
        <linearGradient id="mirrorEnd" gradientUnits="userSpaceOnUse" x1="1350" y1="830" x2="1390" y2="830">
          <stop offset="0" stopColor="#c5c6d4" stopOpacity="0" />
          <stop offset=".6" stopColor="#c5c6d4" />
          <stop offset="1" stopColor="#c4c7d3" />
        </linearGradient>
        <filter id="drop" x="-30%" y="-30%" width="170%" height="170%">
          <feDropShadow dx="2" dy="3" stdDeviation="2" floodColor="#333" floodOpacity=".6" />
        </filter>
      </defs>

      {/* floor reflection */}
      <path d="M1056 768 1052 828C1055 836 1080 843 1096 844L1349 868C1370 868 1384 866 1385 861L1392 799C1385 806 1370 807 1349 806L1098 781Z" fill="url(#mirrorFade)" />
      <path d="M1056 768 1052 828C1055 836 1080 843 1100 845L1104 781 1098 781Z" fill="url(#mirrorEdge)" />
      <path d="M1349 806V868C1370 868 1384 866 1385 861L1392 799C1385 806 1370 807 1349 806Z" fill="url(#mirrorEnd)" />

      {/* cylinder */}
      <path d="M782 434 791 355C797 320 828 294 866 294C906 295 936 326 938 365L930 434Z" fill="#fff" />
      <path d="M900 303C922 315 937 338 938 365L930 434C928 410 916 390 900 379Z" fill="url(#cyl)" />
      <path d="M784 420 791 355C797 320 828 294 866 294C906 295 936 326 938 365L930 432" fill="none" stroke="#000" strokeWidth="1.200" />
      <ellipse cx="856" cy="434.700" rx="73.700" ry="71" fill="#bfbfbf" stroke="#000" strokeWidth="1.200" />
      <ellipse cx="861" cy="400" rx="73.500" ry="71" fill="none" stroke="#808080" strokeWidth="1.200" strokeDasharray="18 4 4 4" />
      <path d="M855.500 399.500H863.500M859.500 395.500V403.500M856.500 396.500 862.500 402.500M862.500 396.500 856.500 402.500" stroke="#777" strokeWidth=".9" />

      {/* slotted block */}
      <g stroke="#000" strokeWidth="1.200" strokeLinejoin="round">
        <path d="M1062 708 1056 767C1062 775 1078 780 1098 781L1103 721Z" fill="url(#cornerL)" />
        <path d="M1103 721 1098 781 1349 806 1355 746Z" fill="#bfbfbf" />
        <path d="M1355 746 1349 806C1374 809 1390 805 1392 798L1398 740Z" fill="url(#cornerR)" />
        <path d="M1072 623C1074 618 1086 616 1101 616L1352 640C1380 642 1402 649 1407 657L1398 740C1393 747 1376 748 1355 746L1103 721C1084 720 1068 715 1062 708Z" fill="#fff" />
      </g>
      <path d="M1067 664 1403 698" stroke="#808080" strokeWidth="1.200" strokeDasharray="18 5 4 5" />

      {/* sketch curves */}
      <g fill="none" stroke="#808080" strokeWidth="2">
        <path d="M866 329.500C967 339 1060 371 1133 414C1222 467 1295 545 1357 656C1366 675 1383 690 1403 698" />
        <path d="M853 470.500C925 486 995 524 1040 586.500C1056 612 1066 638 1067 664" />
      </g>
      <g fill="#777">
        {[[866, 329], [853, 470], [1040, 586], [1067, 664], [1357, 656], [1403, 698]].map(([x, y]) => (
          <circle key={x} cx={x} cy={y} r="2.800" />
        ))}
      </g>
      {plus.map(([x, y]) => (
        <path key={x} d={`M${x - 3} ${y + 0.5}H${x + 4}M${x + 0.5} ${y - 3}V${y + 4}`} stroke="#777" strokeWidth="1" />
      ))}

      {/* model origin */}
      <g stroke="#00f" fill="#00f">
        <path d="M1228.500 742 1230.500 720M1228 742 1238 743M1225 739 1232 746M1232 739 1225 746M1228.500 738V747M1224 742.500H1233" strokeWidth="1" />
        <path d="M1231 711 1234 720H1228ZM1245 744 1236 746.500V740.500Z" stroke="none" />
      </g>

      {/* view triad */}
      <path d="M314.500 908 316.500 886" stroke="#3fae4a" strokeWidth="3" />
      <path d="M317.500 878 321.500 887H313Z" fill="#0b5c10" />
      <path d="M315 907 336 909" stroke="#d40000" strokeWidth="3.500" />
      <path d="M345 909.500 336 905.500V912.500Z" fill="#d40000" />
      <circle cx="314" cy="912" r="4.500" fill="#0000b4" />
      <path d="M313 905H316.500V912H313Z" fill="#1a1ad0" />
      <g className="font-['Liberation_Sans',sans-serif]" fontSize="8" fontWeight="bold" textAnchor="middle">
        <text x="319" y="873" fill="#4c9a58">Y</text>
        <text x="351" y="911" fill="#e04a50">X</text>
      </g>

      {/* callouts */}
      <g filter="url(#drop)" fill="#f00">
        <path d="M918 597.500 972 556" stroke="#f00" strokeWidth="3" strokeLinecap="round" />
        <path d="M987 544 965 551 971 556 975 564Z" />
        <path d="M1202.500 372.500 1190 417" stroke="#f00" strokeWidth="3" strokeLinecap="round" />
        <path d="M1185 436.500 1182.500 412.500 1190 417 1198.500 417.500Z" />
      </g>
      <g className="font-['Noto_Sans_CJK_SC',sans-serif]" filter="url(#drop)" fontSize="26" fill="#f00" stroke="#fff" strokeWidth="6" strokeLinejoin="round" paintOrder="stroke" textAnchor="middle">
        <text x="1233" y="356">引导线</text>
        <text x="875" y="628">路径线</text>
      </g>
    </svg>
  );
}

const zoomGlass = (
  <>
    <path d="M2 18.500 8 12" stroke="#3f86ad" strokeWidth="3" />
    <circle cx="12.500" cy="7.500" r="6" fill="#e8ecf0" stroke="#667" />
  </>
);

const hud: { label: string; icon: ReactNode; caret?: boolean }[] = [
  {
    label: "整屏显示全图",
    icon: (
      <Ico>
        {zoomGlass}
        <path d="M12.500 3 14 5H11ZM12.500 12 14 10H11ZM8 7.500 10 6V9ZM17 7.500 15 6V9Z" fill="#333" stroke="none" />
      </Ico>
    ),
  },
  {
    label: "局部放大",
    icon: (
      <Ico>
        <path d="M7 1H19V13" strokeDasharray="3 2" />
        {zoomGlass}
      </Ico>
    ),
  },
  {
    label: "上一视图",
    icon: (
      <Ico>
        <path d="M1.500 12 14 2.500 18 5.500 6 16.500C3 17 1 14.500 1.500 12Z" fill="#f0f0f0" stroke="#777" />
        <path d="M8 7 12 11M13 3.500 17 7" stroke="#777" />
        <path d="M10 14.500 14 11V13H19V16H14V18.500Z" fill="#2d7fb0" stroke="none" />
      </Ico>
    ),
  },
  {
    label: "剖面视图",
    icon: (
      <Ico>
        <path d="M1.500 5C3 1 17 1 18.500 5V15L13 17.500V9C11 8 9 8 7.500 9V18L1.500 17Z" fill="#f0f0f0" stroke="#555" />
        <path d="M1.500 7H7.500V18L1.500 17ZM13 7.500 18.500 6V15.500L13 17.500Z" fill={B} stroke="#174f6e" />
        <path d="M2 12 7 8M2 16 7 12M13 12 18 8M13 16 18 12" stroke="#174f6e" strokeWidth=".9" />
      </Ico>
    ),
  },
  {
    label: "动态注解视图",
    icon: (
      <Ico>
        <path d="M1.500 13 14 3.500 18 6.500 6 17C3 17 1 15.500 1.500 13Z" fill="#f0f0f0" stroke="#777" />
        <path d="M7 1H13L9 5H12L4 11 6.500 6.500H3.500Z" fill="#f5b63c" stroke="#c0571a" strokeWidth=".8" />
        <path d="M10.500 18.500 14.500 9.500 18.500 18.500M12 15.500H17" stroke="#2d7fb0" strokeWidth="1.700" />
      </Ico>
    ),
  },
  {
    label: "视图定向",
    caret: true,
    icon: (
      <Ico>
        <path d="M1.500 6 6 1.500H19V13L14 18.500H1.500Z" fill="#f0f0f0" stroke="#555" />
        <path d="M14 6 19 1.500M10 1.500V6M14 10H19" stroke="#555" />
        <path d="M1.500 6H14V18.500H1.500Z" fill="#64a9cb" stroke="#174f6e" />
      </Ico>
    ),
  },
  {
    label: "显示样式",
    caret: true,
    icon: (
      <Ico>
        <path d="M2 5 10 1.500 18 4V15.500L10 19 2 16Z" fill="#e6eef2" stroke="#555" />
        <path d="M2 5 9 7.500V18.500L2 16Z" fill="#8cc3de" stroke="#174f6e" />
        <path d="M9 7.500 13.500 5.500V17L9 18.800Z" fill="#4d93b8" stroke="#174f6e" />
        <path d="M13.500 5.500 18 4" stroke="#555" />
      </Ico>
    ),
  },
  {
    label: "隐藏项目",
    caret: true,
    icon: (
      <Ico>
        <path d="M1 10C5 4 15 4 19 10C15 16 5 16 1 10Z" fill="#e8e8e8" stroke="#a5a5a5" />
        <circle cx="10" cy="10" r="3.800" fill="#777" stroke="#555" />
        <path d="M10 3V17" stroke="#333" />
      </Ico>
    ),
  },
  {
    label: "编辑外观",
    icon: (
      <Ico>
        {ballInner}
        <path d="M8 19 9.500 14.500 16 8 19 11 12.500 17.500Z" fill="#f5d564" stroke="#6b4f0b" />
      </Ico>
    ),
  },
  {
    label: "应用布景",
    caret: true,
    icon: (
      <Ico>
        <path d="M1 9H19V19.500H1Z" fill="#555" stroke="#444" />
        <path d="M2 16H4.500V18.500H2ZM6.500 16H9V18.500H6.500ZM11 16H13.500V18.500H11ZM15.500 16H18V18.500H15.500Z" fill="#fff" stroke="none" />
        <g transform="translate(1.500 -.5) scale(.85)">{ballInner}</g>
      </Ico>
    ),
  },
  {
    label: "视图设定",
    caret: true,
    icon: (
      <Ico>
        <rect x="1" y="2.500" width="18" height="12.500" fill="#dcdfe4" stroke="#555" />
        <path d="M10 15V18M6 18H14" strokeWidth="2" stroke="#444" />
      </Ico>
    ),
  },
];

const taskPane: [string, ReactNode][] = [
  ["SOLIDWORKS 资源", home],
  [
    "设计库",
    <Ico>
      <path d="M2 5 6 2 18 3V15L13 19 2 15Z" fill="#fff" />
      <path d="M2 5 6 6.500V17M6 6.500 10 7.500V18M10 7.500 13.500 8.500V19M13.500 8.500 18 3M6 6.500 10 2.500M10 7.500 14 2.800" />
    </Ico>,
  ],
  [
    "文件探索器",
    <Ico>
      <path d="M1.500 17.500V4L3 2.500H8L9 4.500H16V8" fill="#eee" />
      <path d="M1.500 17.500 6.500 8H19L14.500 17.500Z" fill="#fff" />
    </Ico>,
  ],
  [
    "视图调色板",
    <Ico>
      <path d="M1.500 2.500H18.500V18H1.500Z" fill="#fff" />
      <path d="M4 5H10V8H4ZM13 5H16V8H13ZM6 11H9.500V13.500H11.500V16H4V13.500H6Z" fill="#f2c230" stroke="#8a6a10" strokeWidth=".8" />
      <path d="M13.500 11.500H18.500V18H13.500Z" fill="#bbb" />
    </Ico>,
  ],
  ["外观", <Ico>{ballInner}</Ico>],
  ["自定义属性", listIcon],
];

function Graphics() {
  return (
    <main className="relative min-w-0 flex-1 bg-[#c5c9d4]">
      <Model />
      <div className="absolute -left-px top-[382px] flex h-[39px] w-[9px] items-center justify-center border border-l-0 border-[#808080] bg-[#f7f7f7]">
        <span className="h-1.5 w-1.5 rounded-full border border-[#999] bg-[#d4d4d4]" />
      </div>
      <div className="absolute right-0 top-7 w-[26px] border-t-2 border-l-2 border-[#8a8a8a]">
        {taskPane.map(([label, icon], i) => (
          <button key={label} aria-label={label} className={`flex h-6 w-full items-center justify-center border-b-2 border-[#8a8a8a] pr-0.5 ${i === 0 ? "bg-[#f7f7f7]" : "bg-[#d4d4d4]"}`}>
            {icon}
          </button>
        ))}
      </div>
    </main>
  );
}

function ViewToolbar() {
  return (
    <div className="relative flex flex-1 bg-[#c5c9d4]">
      <div className="absolute left-[221px] top-[5px] flex" role="toolbar" aria-label="视图">
        {hud.map((h) => (
          <div key={h.label} className="flex items-center">
            <button aria-label={h.label} className="flex w-[26px] justify-center">
              {h.icon}
            </button>
            {h.caret && (
              <span className="flex w-[14px] justify-center">
                <Caret className="text-[#8b8e96]" />
              </span>
            )}
          </div>
        ))}
      </div>
      <div className="absolute right-[7px] top-[5px] flex">
        <button aria-label="左移" className="flex w-[26px] justify-center">
          <Ico>
            <path d="M4.500 4V16.500H15.500V4" stroke="#888b93" />
            <path d="M4 4.500H16" stroke="#888b93" strokeWidth="2" />
            <path d="M11 7.500V13L7 10.200Z" fill="#888b93" stroke="#888b93" />
          </Ico>
        </button>
        <button aria-label="右移" className="flex w-[26px] justify-center">
          <Ico>
            <path d="M4.500 4V16.500H15.500V4" stroke="#888b93" />
            <path d="M4 4.500H16" stroke="#888b93" strokeWidth="2" />
            <path d="M9 7.500V13L13 10.200Z" fill="#888b93" stroke="#888b93" />
          </Ico>
        </button>
        <button aria-label="最小化文档" className="flex w-[26px] justify-center">
          <Ico>
            <path d="M5.500 15H14.500" stroke="#888b93" strokeWidth="2.500" />
          </Ico>
        </button>
        <button aria-label="还原文档" className="flex w-[26px] justify-center">
          <Ico>
            <path d="M7 9V4H17.500V12.500H12.500M2.500 9H12.500V16.500H2.500Z" stroke="#888b93" />
            <path d="M7 4.300H17.500M2.500 9.300H12.500" stroke="#888b93" strokeWidth="2" />
          </Ico>
        </button>
        <button aria-label="关闭文档" className="flex w-[26px] justify-center">
          <Ico>
            <path d="M5 5 15 15M15 5 5 15" stroke="#888b93" strokeWidth="1.500" />
          </Ico>
        </button>
      </div>
    </div>
  );
}

/* ---------- Bottom bars ---------- */

const steps: [string, string][] = [
  ["第一个", "M4 3V11M11 3 6 7 11 11Z"],
  ["上一个", "M10 3 5 7 10 11Z"],
  ["下一个", "M5 3 10 7 5 11Z"],
  ["最后一个", "M4 3 9 7 4 11ZM11 3V11"],
];

function BottomBar() {
  return (
    <footer className="relative shrink-0 bg-[#f7f7f7]">
      <div className="flex h-4">
        <div className="w-8 shrink-0" />
        <div className="flex flex-1 border-t border-[#808080] text-[13px] leading-[11px]">
          <div className="flex w-[67px] shrink-0 bg-[#b8b8b8] pl-0.5">
            {steps.map(([label, d]) => (
              <button key={label} aria-label={label} className="flex w-4 items-center justify-center border border-[#8a8a8a] bg-[#b4b4b4]">
                <svg width="14" height="14" viewBox="0 0 14 14" fill="#8f9196" stroke="#8f9196" className="shrink-0" aria-hidden="true">
                  <path d={d} />
                </svg>
              </button>
            ))}
          </div>
          <button className="w-12 border-r border-[#808080] pb-1 pl-0.5">模型</button>
          <button className="w-[59px] border-r border-[#808080] bg-[#d4d4d4] pb-1">3D 视图</button>
          <button className="w-[84px] border-r border-[#808080] bg-[#d4d4d4] pr-2 pb-1">运动算例 1</button>
        </div>
      </div>
      <div className="flex h-[33px] items-center border-b border-[#808080]">
        <div className="ml-[3px] h-[26px] border-l-[3px] border-dotted border-[#aaa]" />
        <select aria-label="配置" disabled className="ml-2.5 h-[25px] w-[98px] appearance-none border border-[#e4e4e4] bg-[#fafafa] text-xs" />
        <svg width="10" height="6" viewBox="0 0 10 6" fill="none" stroke="#bbb" strokeWidth="1.500" className="-ml-[14px]" aria-hidden="true">
          <path d="M1 1 5 5 9 1" />
        </svg>
        <span className="ml-2">
          <Ico size={18}>
            <path d="M1 6 12 2 18 5V12L7 17 1 14Z" fill="#eee" stroke="#c4c4c4" />
            <path d="M1 6 7 9 18 5M1 9 7 12 18 7.500M1 12 7 15 18 10" stroke="#c4c4c4" />
          </Ico>
        </span>
        <div className="ml-3 mt-0.5 h-[31px] w-px bg-[#808080]" />
      </div>
      <div className="flex h-[19px] items-center border-b border-[#a0b4b6] pl-px pt-0.5 text-xs text-black">
        <span className="font-['Noto_Sans',sans-serif]">SOLIDWORKS 2023 SP0.1</span>
        <button className="ml-auto flex items-center gap-4 leading-[14px]">
          自定义
          <svg width="6" height="4" viewBox="0 0 6 4" aria-hidden="true">
            <path d="M0 3.500H6L3 0Z" fill="#333" />
          </svg>
        </button>
        <span className="ml-[26px] mr-0.5">
          <Ico size={18}>
            <path d="M2 5 14 8 18.500 13 14 18 2 12Z" fill="#fff" />
            <path d="M2 5 6 2 17 5.500 18.500 13M5 9 8 7.500M8 11 11 9.500M11 14 14 11" />
          </Ico>
        </span>
      </div>
      <div className="h-[3px] bg-[#cdeded]" />

      <div className="absolute bottom-[18px] right-0 flex h-[26px] w-[196px] items-center border border-[#a9c6ea] bg-[#fbfbfb]/80 text-[#0a6fd6]">
        <svg width="200" height="30" viewBox="0 0 200 30" className="-ml-2 shrink-0 overflow-visible" fill="none" stroke="#0a6fd6" strokeWidth="2" aria-hidden="true">
          <g transform="rotate(-8 18 14)">
            <rect x="6" y="1" width="25" height="26" rx="3" fill="#f4511e" stroke="none" />
            <path d="M27 7C19 3 10 6 12 11C14 15 24 12 25 17C25 22 15 23 8 20" stroke="#fff" strokeWidth="3.500" />
          </g>
          <path d="M66 11V14M74 15C76 17 75 19 73 20" strokeWidth="3" />
          <rect x="92" y="6" width="6" height="10" rx="3" fill="#0a6fd6" stroke="none" />
          <path d="M89 12C89 21 101 21 101 12M95 19V23" />
          <rect x="112" y="8" width="17" height="12" rx="2" />
          <path d="M116 12H118M120 12H122M124 12H126M116 16H126M121 8V20" />
          <path d="M137 12 142 8 149 10 155 7" stroke="#e8403c" strokeWidth="4" />
          <path d="M143 12H150V20H143Z" fill="#7a5ae0" stroke="#7a5ae0" />
          <path d="M162 8H166V12H162ZM171 8H175V12H171ZM162 17H166V21H162ZM171 17H175V21H171Z" fill="#0a6fd6" />
          <circle cx="191" cy="14" r="9" fill="#f6efe8" stroke="#ddd" strokeWidth="1" />
          <path d="M182 12H198L194 16H186Z" fill="#6b2c12" stroke="none" />
          <path d="M198 7 200 11 204 12 200 14 199 17 197 13Z" fill="#f6c52c" stroke="none" />
        </svg>
        <span className="absolute left-[31px] text-[15px] font-bold leading-4">中</span>
      </div>
      <p className="pointer-events-none absolute bottom-4 right-[7px] whitespace-nowrap font-['Liberation_Sans','Noto_Sans_CJK_SC',sans-serif] text-[35px] font-light leading-9 text-[#e2e2e2]/60 [text-shadow:1px_1px_1px_#9a9a9a]">
        CSDN @山涧果子
      </p>
    </footer>
  );
}

export default function App() {
  return (
    <div className="flex h-screen flex-col overflow-hidden bg-[#f7f7f7] font-['Noto_Sans','Noto_Sans_CJK_SC',sans-serif]">
      <TitleBar />
      <Ribbon />
      <div className="relative z-10 flex h-[22px] shrink-0">
        <div className="flex" role="tablist">
          {tabs.map(([latin, cjk, w], i) => (
            <button
              key={latin + cjk}
              role="tab"
              aria-selected={i === 0}
              className={`whitespace-pre border-r border-b border-[#808080] pb-0.5 text-[13px] leading-[18px] ${w} ${i === 0 ? "bg-[#f7f7f7] text-[#555]" : "bg-[#d4d4d4] text-[#222]"}`}
            >
              {latin && <span className="text-[11px]">{latin}</span>}
              {cjk}
            </button>
          ))}
        </div>
        <ViewToolbar />
      </div>
      <div className="flex min-h-0 flex-1">
        <SidePanel />
        <Graphics />
      </div>
      <BottomBar />
    </div>
  );
}
